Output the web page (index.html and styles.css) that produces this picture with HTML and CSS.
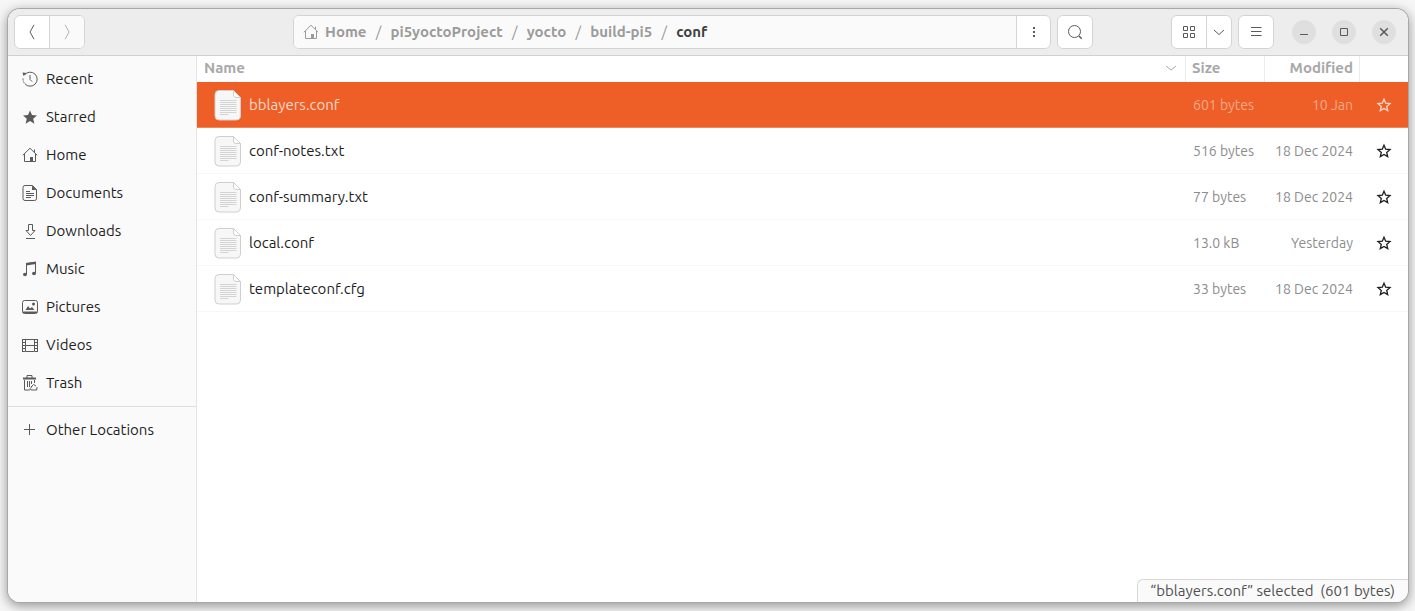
FILE: index.html
```html
<!DOCTYPE html>
<html lang="en">
<head>
<meta charset="utf-8">
<title>conf</title>
<link rel="stylesheet" href="styles.css">
</head>
<body>
<svg class="defs" aria-hidden="true">
  <symbol id="home" viewBox="0 0 16 16"><path d="M.8 8.3 8 1.2l7.2 7.1M2.500 7v7.500h11V7M12.500 5.500V2.500" class="line"/><path d="M8 10h3v5H8z" class="solid"/></symbol>
  <symbol id="star" viewBox="0 0 16 16"><path d="m8 2.200 1.700 4 4.300.4-3.300 2.800 1 4.200L8 11.400l-3.700 2.200 1-4.200L2 6.600l4.300-.4z" class="star-line"/></symbol>
  <symbol id="file" viewBox="0 0 28 32"><path d="M5 1.500h14.500l7 7V27a4 4 0 0 1-4 4H5a4 4 0 0 1-4-4V5.500a4 4 0 0 1 4-4z" class="sheet"/><path d="M19.500 1.500V6a2.500 2.500 0 0 0 2.500 2.500h4.500z" class="fold"/><path d="M6 11.500h16.500M6 13.500h16.500M6 15.500h16.500M6 17.500h16.500M6 19.500h16.500M6 21.500h16.500M6 23.500h16.500M6 25.500h8.500" class="rules"/></symbol>
</svg>
<main class="window">
  <header class="headerbar">
    <div class="group nav">
      <button class="btn" aria-label="Back"><svg class="icon" viewBox="0 0 16 16"><path d="M10 .8 6 8l4 7.200" class="line"/></svg></button>
      <button class="btn faded" aria-label="Forward"><svg class="icon" viewBox="0 0 16 16"><path d="m6 .8 4 7.200-4 7.200" class="line"/></svg></button>
    </div>
    <div class="group location">
      <nav class="path" aria-label="Location">
        <a href="#" class="crumb"><svg class="icon"><use href="#home"/></svg>Home</a><span class="slash">/</span>
        <a href="#" class="crumb">pi5yoctoProject</a><span class="slash">/</span>
        <a href="#" class="crumb">yocto</a><span class="slash">/</span>
        <a href="#" class="crumb">build-pi5</a><span class="slash">/</span>
        <a href="#" class="crumb current" aria-current="page">conf</a>
      </nav>
      <button class="btn" aria-label="Folder menu"><svg class="icon" viewBox="0 0 16 16"><path d="M7 3h2v2H7zM7 7h2v2H7zM7 11h2v2H7z" class="solid"/></svg></button>
    </div>
    <div class="group"><button class="btn" aria-label="Search"><svg class="icon" viewBox="0 0 16 16"><circle cx="7.500" cy="7.500" r="6" class="line"/><path d="m12 12 2.700 2.700" class="thick"/></svg></button></div>
    <div class="group view">
      <button class="btn" aria-label="Grid view"><svg class="icon" viewBox="0 0 16 16"><path d="M2.500 2.500h4v4h-4zM9.500 2.500h4v4h-4zM2.500 9.500h4v4h-4zM9.500 9.500h4v4h-4z" class="line"/></svg></button>
      <button class="btn narrow" aria-label="View options"><svg class="icon" viewBox="0 0 16 16"><path d="m3 6 5 4.500L13 6" class="line"/></svg></button>
    </div>
    <div class="group"><button class="btn" aria-label="Main menu"><svg class="icon" viewBox="0 0 16 16"><path d="M3 3.500h10.500M3 7.500h10.500M3 11.500h10.500" class="line"/></svg></button></div>
    <div class="controls">
      <button class="round" aria-label="Minimise"><svg class="icon" viewBox="0 0 16 16"><path d="M4 10.500h8" class="line"/></svg></button>
      <button class="round" aria-label="Maximise"><svg class="icon" viewBox="0 0 16 16"><path d="M4.500 4.500h7v7h-7z" class="line"/></svg></button>
      <button class="round" aria-label="Close"><svg class="icon" viewBox="0 0 16 16"><path d="m4.200 4.200 7.600 7.600m0-7.600-7.600 7.600" class="thick"/></svg></button>
    </div>
  </header>
  <div class="body">
    <nav class="sidebar" aria-label="Places">
      <a href="#" class="place"><svg class="icon" viewBox="0 0 16 16"><path d="M2.700 3.800A7 7 0 1 1 3 12.900" class="line"/><path d="M2.500 12.300A7 7 0 0 1 1 7.500" class="dash"/><path d="M8 4v4.500l2 2" class="line"/><path d="M.5 1.500 4.500 2 1.500 5z" class="solid"/></svg>Recent</a>
      <a href="#" class="place"><svg class="icon" viewBox="0 0 16 16"><path d="m8 1.500 2 4.600 5 .4-3.800 3.300 1.200 4.900L8 12.100l-4.400 2.600 1.200-4.900L1 6.500l5-.4z" class="solid"/></svg>Starred</a>
      <a href="#" class="place"><svg class="icon"><use href="#home"/></svg>Home</a>
      <a href="#" class="place"><svg class="icon" viewBox="0 0 16 16"><path d="M3 .5h7.500l4 4v9a2 2 0 0 1-2 2H3a2 2 0 0 1-2-2v-11a2 2 0 0 1 2-2z" class="line"/><path d="M10 .5v4.500h4.500z" class="solid"/><path d="M4 6.500h4M4 8.500h8M4 10.500h8M4 12.500h5" class="line"/></svg>Documents</a>
      <a href="#" class="place"><svg class="icon" viewBox="0 0 16 16"><path d="M6.500 1.500h4v6H13l-4.500 5L4 7.500h2.500zM4 15.500h9" class="line"/></svg>Downloads</a>
      <a href="#" class="place"><svg class="icon" viewBox="0 0 16 16"><path d="M4.500 13V2.500l9-1V12" class="line"/><path d="M4 2l10-1.500v2.500L4 4.500z" class="solid"/><ellipse cx="3" cy="13.500" rx="2" ry="1.800" class="solid"/><ellipse cx="12" cy="12.500" rx="2" ry="1.800" class="solid"/></svg>Music</a>
      <a href="#" class="place"><svg class="icon" viewBox="0 0 16 16"><rect x=".5" y="1.500" width="15" height="13" rx="2" class="line"/><path d="M1 12.500h14v1.500H1zM3.500 11l2.500-4 2 2.500L10 8l2.500 3z" class="solid"/><circle cx="11.500" cy="5" r="1.500" class="solid"/></svg>Pictures</a>
      <a href="#" class="place"><svg class="icon" viewBox="0 0 16 16"><path d="M3.500 2v12.500M12.500 2v12.500M3.500 2.500h9M3.500 8.500h9M3.500 14.500h9" class="line"/><path d="M.5 2v13M15.500 2v13" class="line"/><path d="M1 2.500h2M1 5.500h2M1 8.500h2M1 11.500h2M1 14.500h2M13 2.500h2M13 5.500h2M13 8.500h2M13 11.500h2M13 14.500h2" class="line"/></svg>Videos</a>
      <a href="#" class="place"><svg class="icon" viewBox="0 0 16 16"><path d="M5 3V.500h5V3M2.500 5v10H8M5.500 6v6M7.500 6v6M9.500 6v3M12.500 5v3" class="line"/><path d="M1 2.500h13V4.500H1z" class="solid"/><path d="m9 12 2.500-2.500L14 11M15 12l-.3 3H9l-.8-1.500L10 11.500" class="line"/></svg>Trash</a>
      <hr class="divider">
      <a href="#" class="place"><svg class="icon" viewBox="0 0 16 16"><path d="M7.500 2v11M2 7.500h11" class="line"/></svg>Other Locations</a>
    </nav>
    <section class="content">
      <table class="files">
        <thead>
          <tr>
            <th class="name"><button class="sort">Name<svg class="icon" viewBox="0 0 16 16"><path d="m3 6 5 4 5-4" class="line"/></svg></button></th>
            <th class="size">Size</th>
            <th class="modified">Modified</th>
            <th class="starred"></th>
          </tr>
        </thead>
        <tbody>
          <tr class="selected"><td><span class="file"><svg class="doc"><use href="#file"/></svg>bblayers.conf</span></td><td class="size">601 bytes</td><td class="modified">10 Jan</td><td class="starred"><button class="star" aria-label="Star bblayers.conf"><svg class="icon"><use href="#star"/></svg></button></td></tr>
          <tr><td><span class="file"><svg class="doc"><use href="#file"/></svg>conf-notes.txt</span></td><td class="size">516 bytes</td><td class="modified">18 Dec 2024</td><td class="starred"><button class="star" aria-label="Star conf-notes.txt"><svg class="icon"><use href="#star"/></svg></button></td></tr>
          <tr><td><span class="file"><svg class="doc"><use href="#file"/></svg>conf-summary.txt</span></td><td class="size">77 bytes</td><td class="modified">18 Dec 2024</td><td class="starred"><button class="star" aria-label="Star conf-summary.txt"><svg class="icon"><use href="#star"/></svg></button></td></tr>
          <tr><td><span class="file"><svg class="doc"><use href="#file"/></svg>local.conf</span></td><td class="size">13.0 kB</td><td class="modified">Yesterday</td><td class="starred"><button class="star" aria-label="Star local.conf"><svg class="icon"><use href="#star"/></svg></button></td></tr>
          <tr><td><span class="file"><svg class="doc"><use href="#file"/></svg>templateconf.cfg</span></td><td class="size">33 bytes</td><td class="modified">18 Dec 2024</td><td class="starred"><button class="star" aria-label="Star templateconf.cfg"><svg class="icon"><use href="#star"/></svg></button></td></tr>
        </tbody>
      </table>
      <div class="status" role="status">“bblayers.conf” selected&nbsp; (601 bytes)</div>
    </section>
  </div>
</main>
</body>
</html>
```
FILE: styles.css
```css
* {
  box-sizing: border-box;
}

body {
  margin: 0;
  height: 100vh;
  padding: 9px 7px 9px 8px;
  display: flex;
  overflow: hidden;
  background: #f6f6f6;
  color: #1e1e1e;
  font: 15px/20px Ubuntu, "Noto Sans", sans-serif;
}

button {
  font: inherit;
  color: inherit;
  padding: 0;
  border: 0;
  background: none;
}

a {
  color: inherit;
  text-decoration: none;
}

.defs {
  position: absolute;
  width: 0;
  height: 0;
}

.icon {
  width: 16px;
  height: 16px;
  flex: none;
}

.line,
.thick,
.dash {
  fill: none;
  stroke: currentColor;
  stroke-width: 1;
}

.thick {
  stroke-width: 1.5;
}

.dash {
  stroke-dasharray: 2 1;
}

.solid {
  fill: currentColor;
}

.star-line {
  fill: none;
  stroke: currentColor;
  stroke-width: 1.3;
}

.window {
  flex: 1;
  min-width: 0;
  display: flex;
  flex-direction: column;
  overflow: hidden;
  border-radius: 12px;
  background: #fff;
  box-shadow: 0 0 0 1px #a8a8a8, 0 3px 12px 1px rgba(0, 0, 0, 0.4);
}

.headerbar {
  flex: none;
  display: flex;
  align-items: center;
  padding: 6px 12px 6px 6px;
  gap: 6px;
  background: #ededed;
  border-bottom: 1px solid #d0d0d0;
  color: #5a5a5a;
}

.group {
  display: flex;
  height: 34px;
  border: 1px solid #d4d4d4;
  border-radius: 6px;
  background: #fff;
}

.btn {
  width: 34px;
  display: grid;
  place-items: center;
}

.btn + .btn,
.path + .btn {
  border-left: 1px solid #d4d4d4;
}

.btn + .btn {
  width: 35px;
}

.btn.narrow {
  width: 25px;
}

.btn.faded {
  color: #b0b0b0;
  background: #fafafa;
  border-radius: 0 5px 5px 0;
}

.nav {
  margin-right: 202px;
}

.location {
  flex: 1;
  min-width: 0;
}

.path {
  flex: 1;
  min-width: 0;
  overflow: hidden;
  display: flex;
  align-items: center;
  padding-left: 9px;
  background: #fafafa;
  border-radius: 5px 0 0 5px;
  color: #9b9b9b;
  font-weight: 600;
}

.path .current {
  color: #404040;
}

.crumb {
  display: flex;
  align-items: center;
  gap: 6px;
}

.slash {
  width: 24px;
  text-align: center;
  font-weight: 400;
}

.view {
  margin-left: 72px;
}

.controls {
  display: flex;
  gap: 16px;
  margin-left: 12px;
}

.round {
  width: 24px;
  height: 24px;
  border-radius: 50%;
  background: #dfdfdf;
  display: grid;
  place-items: center;
}

.body {
  flex: 1;
  min-height: 0;
  display: flex;
}

.sidebar {
  flex: none;
  width: 189px;
  padding-top: 4px;
  background: #fafafa;
  border-right: 1px solid #e4e4e4;
}

.place {
  height: 38px;
  padding-left: 14px;
  display: flex;
  align-items: center;
  gap: 8px;
}

.place .icon {
  color: #5a5a5a;
}

.divider {
  margin: 4px 0;
  border: 0;
  border-top: 1px solid #dedede;
}

.content {
  flex: 1;
  min-width: 0;
  display: flex;
  flex-direction: column;
  justify-content: space-between;
}

.files {
  width: 100%;
  table-layout: fixed;
  border-collapse: separate;
  border-spacing: 0;
}

th {
  height: 26px;
  padding: 0 6px 2px;
  text-align: left;
  font-weight: 600;
  color: #a8a8a8;
  border-right: 1px solid #ececec;
}

th.name {
  padding-left: 7px;
}

th.size {
  width: 79px;
}

th.modified {
  width: 95px;
}

th.starred {
  width: 48px;
  border: 0;
}

.sort {
  width: 100%;
  display: flex;
  align-items: center;
  justify-content: space-between;
}

td {
  height: 46px;
  padding: 0 7px;
  border-bottom: 1px solid #f7f7f7;
}

td.size,
td.modified {
  color: #8c8c8c;
  font-size: 14px;
  white-space: nowrap;
}

.modified {
  text-align: right;
}

.file {
  display: flex;
  align-items: center;
  gap: 7px;
  padding-left: 10px;
}

.doc {
  width: 28px;
  height: 32px;
}

.sheet {
  fill: #f7f7f7;
  stroke: #cfcfcf;
}

.fold {
  fill: #fff;
  stroke: #cfcfcf;
}

.rules {
  stroke: #d4d4d4;
  stroke-width: 1;
}

.star {
  display: grid;
  place-items: center;
  margin: 0 auto;
}

.selected td {
  background: #ed5f26;
  color: #fbd9cb;
  border-color: #f0855a;
}

.selected td.size,
.selected td.modified {
  color: #f6a98a;
}

.selected .sheet {
  fill: #fafafa;
  stroke: #f0e4de;
}

.selected .rules {
  stroke: #e0e0e0;
}

.status {
  align-self: flex-end;
  padding: 1px 13px 1px 12px;
  border: solid #d8d8d8;
  border-width: 1px 0 0 1px;
  border-radius: 6px 0 0 0;
  background: #fafafa;
  color: #505050;
}
```
